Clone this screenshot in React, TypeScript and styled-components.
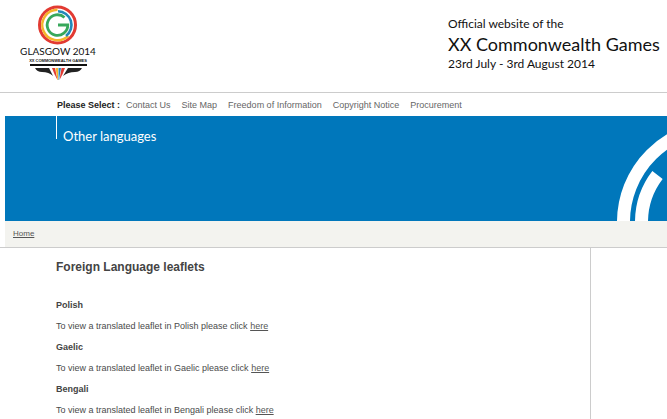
import React from "react";
import styled, { createGlobalStyle } from "styled-components";

const GlobalStyle = createGlobalStyle`
  body {
    margin: 0;
    background: #fff;
    color: #4a4a4a;
    font-family: "Liberation Sans", Arial, sans-serif;
    font-size: 9px;
    line-height: 12px;
    overflow: hidden;
  }
`;

const Header = styled.header`
  display: flex;
  justify-content: space-between;
  height: 92px;
  padding: 0 5px 0 20px;
  border-bottom: 1px solid #ccc;
`;

const Logo = styled.svg`
  display: block;
  flex: none;
  margin-top: 3px;
`;

const Tagline = styled.div`
  width: 214px;
  padding-top: 15px;
  color: #111;
  font-family: Lato, sans-serif;
  white-space: nowrap;
`;

const TagLine = styled.p<{ $large?: boolean }>`
  margin: 0;
  font-size: ${(p) => (p.$large ? 18 : 12)}px;
  line-height: ${(p) => (p.$large ? 22 : 18)}px;
`;

const Nav = styled.nav`
  display: flex;
  align-items: center;
  gap: 11px;
  height: 23px;
  padding-left: 57px;
  white-space: nowrap;
`;

const NavLabel = styled.strong`
  margin-right: -5px;
  color: #222;
  font-weight: bold;
`;

const NavLink = styled.a`
  color: #666;
  text-decoration: none;
`;

const Banner = styled.section`
  display: flex;
  justify-content: space-between;
  height: 105px;
  margin-left: 5px;
  padding-left: 51px;
  background: #0077bb;
`;

const BannerTitle = styled.h1`
  height: 23px;
  margin: 0;
  padding-left: 6px;
  border-left: 1px solid #fff;
  color: #fff;
  font: 13px/40px Lato, sans-serif;
`;

const Rings = styled.svg`
  display: block;
  flex: none;
`;

const Breadcrumb = styled.nav`
  padding-left: 5px;
  border-bottom: 1px solid #ccc;
`;

const Trail = styled.div`
  height: 26px;
  padding-left: 8px;
  background: #f3f3ef;
  font-size: 8px;
  line-height: 25px;
`;

const TextLink = styled.a`
  color: #555;
  text-decoration: underline;
`;

const Main = styled.main`
  min-height: 171px;
  margin-right: 76px;
  padding-left: 56px;
  border-right: 1px solid #ccc;
`;

const Heading = styled.h2`
  margin: 0 0 20px;
  padding-top: 11px;
  color: #444;
  font-size: 12px;
  line-height: 16px;
`;

const Language = styled.h3`
  margin: 0;
  color: #444;
  font-size: 9px;
  line-height: 21px;
`;

const Text = styled.p`
  margin: 0;
  font-size: 9px;
  line-height: 21px;
`;

const navItems = ["Contact Us", "Site Map", "Freedom of Information", "Copyright Notice", "Procurement"];
const languages = ["Polish", "Gaelic", "Bengali"];

function GamesLogo() {
  return (
    <Logo width="76" height="80" viewBox="0 0 76 80" role="img" aria-label="Glasgow 2014 XX Commonwealth Games">
      <g fill="none">
        <circle cx="37.500" cy="22" r="18" stroke="#e23a32" strokeWidth="3" />
        <path d="M37.500 6.800A15.200 15.200 0 1 0 48.200 32.800" stroke="#f5b52b" strokeWidth="2.400" />
        <path d="M38 8.200A13.800 13.800 0 0 1 46 33" stroke="#2388b8" strokeWidth="2.600" />
        <path d="M44.500 14.500A10.300 10.300 0 1 0 47.800 22H38" stroke="#37a85b" strokeWidth="2.800" />
      </g>
      <text x="38" y="52" textAnchor="middle" fontFamily="Lato, sans-serif" fontSize="10" fill="#111">GLASGOW 2014</text>
      <text x="38" y="59" textAnchor="middle" fontFamily="Liberation Sans, sans-serif" fontWeight="bold" fontSize="4" fill="#111">XX COMMONWEALTH GAMES</text>
      <path d="M10 61H67V63H10Z" fill="#111" />
      <path d="M15 65H29L33 73Q29 69 22 69Q17 69 15 65ZM62 65H48L43 73Q48 69 55 69Q60 69 62 65Z" fill="#222" />
      <path d="M32 65H35L37.500 77Q34 71 32 65Z" fill="#e23a32" />
      <path d="M35.500 65H38L38 77H37.500Z" fill="#f5b52b" />
      <path d="M38.500 65H41L39 77H38.500Z" fill="#2388b8" />
      <path d="M41.500 65H45Q43 71 39.500 77Z" fill="#e23a32" />
    </Logo>
  );
}

export default function App() {
  return (
    <>
      <GlobalStyle />
      <Header>
        <GamesLogo />
        <Tagline>
          <TagLine>Official website of the</TagLine>
          <TagLine $large>XX Commonwealth Games</TagLine>
          <TagLine>23rd July - 3rd August 2014</TagLine>
        </Tagline>
      </Header>
      <Nav aria-label="Site links">
        <NavLabel>Please Select :</NavLabel>
        {navItems.map((item) => (
          <NavLink href="#" key={item}>{item}</NavLink>
        ))}
      </Nav>
      <Banner>
        <BannerTitle>Other languages</BannerTitle>
        <Rings width="52" height="105" viewBox="0 0 52 105" aria-hidden="true">
          <g fill="none" stroke="#fff" strokeWidth="13">
            <circle cx="104" cy="106" r="95.500" />
            <path d="M26.500 106A77.500 77.500 0 0 1 42.500 59" />
          </g>
        </Rings>
      </Banner>
      <Breadcrumb aria-label="Breadcrumb">
        <Trail>
          <TextLink href="#">Home</TextLink>
        </Trail>
      </Breadcrumb>
      <Main>
        <Heading>Foreign Language leaflets</Heading>
        {languages.map((language) => (
          <React.Fragment key={language}>
            <Language>{language}</Language>
            <Text>
              To view a translated leaflet in {language} please click <TextLink href="#">here</TextLink>
            </Text>
          </React.Fragment>
        ))}
      </Main>
    </>
  );
}
